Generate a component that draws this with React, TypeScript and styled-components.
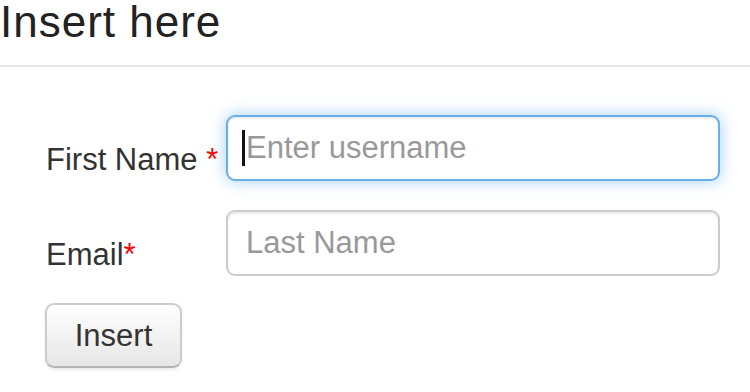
import React from 'react'
import styled, { createGlobalStyle, css } from 'styled-components'

const colors = {
  text: '#333333',
  title: '#222222',
  rule: '#e5e5e5',
  border: '#cccccc',
  focus: '#66afe9',
  placeholder: '#999999',
  required: '#ff0000',
}

const GlobalStyle = createGlobalStyle`
  html, body {
    margin: 0;
    padding: 0;
    background: #ffffff;
  }
  body {
    font-family: 'Liberation Sans', Arial, Helvetica, sans-serif;
    color: ${colors.text};
  }
`

const Page = styled.div`
  width: 750px;
  height: 392px;
  overflow: hidden;
`

const Legend = styled.h1`
  margin: 0;
  padding: 0 0 21px 0;
  font: 400 44px/44px 'Liberation Sans', Arial, sans-serif;
  letter-spacing: 1px;
  color: ${colors.title};
  border-bottom: 2px solid ${colors.rule};
`

const Form = styled.form`
  display: flex;
  flex-direction: column;
  padding: 48px 0 0 46px;
`

const FormRow = styled.div`
  display: grid;
  grid-template-columns: 180px 494px;
  margin-bottom: 28px;
`

const Label = styled.label`
  padding-top: 23px;
  font: 400 31px/44px 'Liberation Sans', Arial, sans-serif;
  color: ${colors.text};
  white-space: nowrap;
`

const Required = styled.span`
  color: ${colors.required};
`

const InputWrap = styled.div`
  position: relative;
`

const Input = styled.input<{ $focused?: boolean }>`
  box-sizing: border-box;
  width: 100%;
  height: 66px;
  padding: 0 18px;
  border: 2px solid ${colors.border};
  border-radius: 9px;
  font: 400 31px 'Liberation Sans', Arial, sans-serif;
  color: ${colors.text};
  background: #ffffff;
  outline: none;
  box-shadow: inset 0 2px 2px rgba(0, 0, 0, 0.075);
  &::placeholder {
    color: ${colors.placeholder};
    opacity: 1;
  }
  ${(p) =>
    p.$focused &&
    css`
      border-color: ${colors.focus};
      box-shadow: inset 0 2px 2px rgba(0, 0, 0, 0.075),
        0 0 16px rgba(102, 175, 233, 0.6);
    `}
`

const Caret = styled.span`
  position: absolute;
  left: 16px;
  top: 15px;
  width: 3px;
  height: 36px;
  background: #111111;
`

const Button = styled.button`
  align-self: flex-start;
  box-sizing: border-box;
  width: 137px;
  height: 65px;
  margin: -2px 0 0 -1px;
  padding: 0;
  border: 2px solid ${colors.border};
  border-bottom-color: #b3b3b3;
  border-radius: 9px;
  background: linear-gradient(to bottom, #ffffff, #e6e6e6);
  box-shadow: inset 0 2px 0 rgba(255, 255, 255, 0.2),
    0 2px 3px rgba(0, 0, 0, 0.08);
  font: 400 31px/1 'Liberation Sans', Arial, sans-serif;
  color: ${colors.text};
  cursor: pointer;
`

const App = () => {
  return (
    <Page>
      <GlobalStyle />
      <Legend>Insert here</Legend>
      <Form onSubmit={(e) => e.preventDefault()}>
        <FormRow>
          <Label htmlFor="username">
            First Name <Required>*</Required>
          </Label>
          <InputWrap>
            <Input id="username" placeholder="Enter username" $focused />
            <Caret />
          </InputWrap>
        </FormRow>
        <FormRow>
          <Label htmlFor="lastname">
            Email<Required>*</Required>
          </Label>
          <InputWrap>
            <Input id="lastname" placeholder="Last Name" />
          </InputWrap>
        </FormRow>
        <Button type="submit">Insert</Button>
      </Form>
    </Page>
  )
}

export default App
